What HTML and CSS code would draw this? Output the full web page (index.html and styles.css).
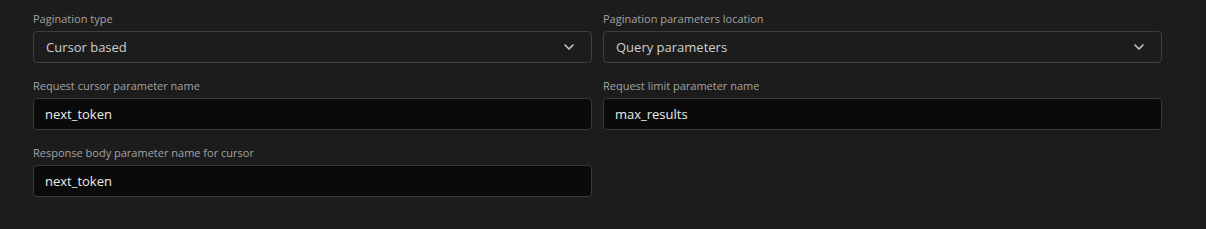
FILE: index.html
```html
<!DOCTYPE html>
<html>

<head>
  <title>Pagination settings</title>
  <link rel="stylesheet" href="styles.css">
</head>

<body>
  <div class="form">
    <div class="field">
      <label for="paginationType">Pagination type</label>
      <div class="select" id="paginationType">
        <span>Cursor based</span>
        <svg class="chevron" width="12" height="12" viewBox="0 0 12 12">
          <path d="M2 4 L6 8 L10 4" fill="none" stroke="#c8c8c8" stroke-width="1.6" stroke-linecap="round" stroke-linejoin="round" />
        </svg>
      </div>
    </div>
    <div class="field">
      <label for="paramsLocation">Pagination parameters location</label>
      <div class="select" id="paramsLocation">
        <span>Query parameters</span>
        <svg class="chevron" width="12" height="12" viewBox="0 0 12 12">
          <path d="M2 4 L6 8 L10 4" fill="none" stroke="#c8c8c8" stroke-width="1.6" stroke-linecap="round" stroke-linejoin="round" />
        </svg>
      </div>
    </div>
    <div class="field">
      <label for="cursorName">Request cursor parameter name</label>
      <input id="cursorName" class="textInput" type="text" value="next_token" />
    </div>
    <div class="field">
      <label for="limitName">Request limit parameter name</label>
      <input id="limitName" class="textInput" type="text" value="max_results" />
    </div>
    <div class="field">
      <label for="responseName">Response body parameter name for cursor</label>
      <input id="responseName" class="textInput" type="text" value="next_token" />
    </div>
  </div>
</body>

</html>
```

FILE: styles.css
```css
body {
  margin: 0;
  background: #1c1c1c;
  font-family: "Open Sans", "Liberation Sans", sans-serif;
}

.form {
  display: grid;
  grid-template-columns: 1fr 1fr;
  column-gap: 11px;
  row-gap: 14px;
  padding: 10px 44px 0 33px;
}

.field {
  display: flex;
  flex-direction: column;
}

.field>label {
  font-size: 11px;
  line-height: 17px;
  margin-bottom: 4px;
  color: #a3a3a3;
}

.select,
.textInput {
  box-sizing: border-box;
  height: 32px;
  border-radius: 4px;
  font-family: inherit;
  font-size: 13px;
}

.select {
  display: flex;
  align-items: center;
  justify-content: space-between;
  padding: 0 16px 0 12px;
  border: 1px solid #3e3e3e;
  color: #cfcfcf;
}

.chevron {
  display: block;
}

.textInput {
  width: 100%;
  padding: 0 11px;
  border: 1px solid #3a3a3a;
  background: #0a0a0a;
  color: #ececec;
  outline: none;
}
```
